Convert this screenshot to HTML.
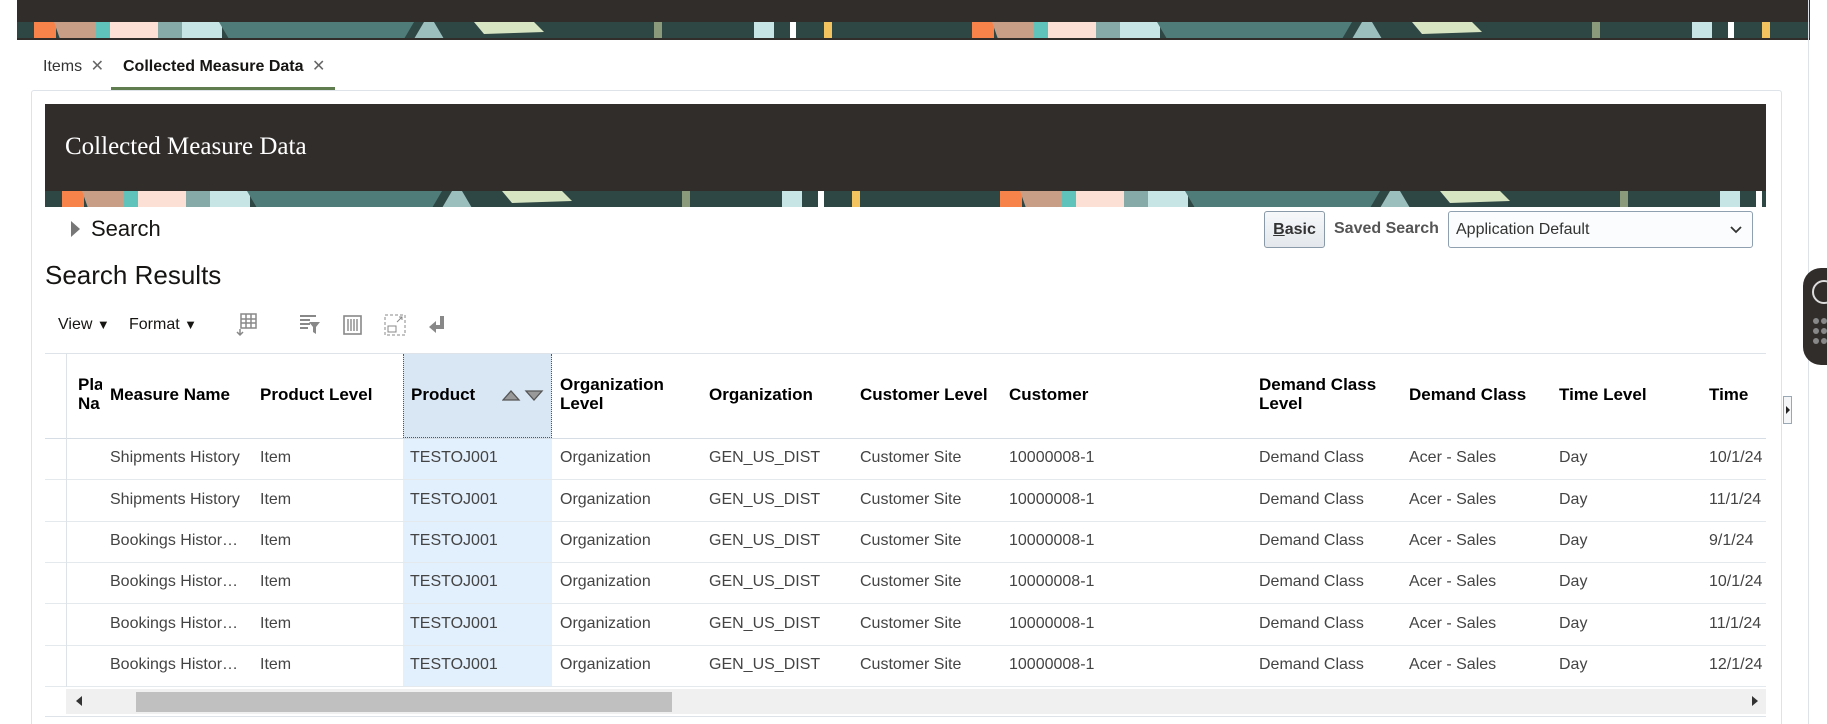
<!DOCTYPE html>
<html><head><meta charset="utf-8">
<style>
*{margin:0;padding:0;box-sizing:border-box}
html{width:1827px;height:724px;overflow:hidden}
body{width:1827px;height:724px;overflow:hidden;background:#fff;font-family:"Liberation Sans",Arial,sans-serif;color:#161513;position:relative}
.abs{position:absolute;white-space:nowrap}
.th{position:absolute;font-weight:bold;font-size:17px;color:#000;line-height:19px;white-space:nowrap}
.td{position:absolute;font-size:16px;color:#444;white-space:nowrap}
.hl{position:absolute;left:45px;width:1721px;height:1px;background:#e4e9ee}
</style></head><body>
<svg width="0" height="0" style="position:absolute">
<defs>
<pattern id="pt" x="17" y="0" width="938" height="17" patternUnits="userSpaceOnUse">
<rect width="938" height="17" fill="#2e4644"/>
<rect x="0" width="22" height="17" fill="#f7834a"/>
<polygon points="20,0 68,0 62,17 26,17" fill="#c99e86"/>
<rect x="62" width="14" height="17" fill="#5fc3bc"/>
<rect x="76" width="48" height="17" fill="#fde0d5"/>
<rect x="124" width="34" height="17" fill="#86aaa7"/>
<rect x="148" width="40" height="17" fill="#c8e5e5"/>
<polygon points="185,0 380,0 370,17 195,17" fill="#4f7c78"/>
<polygon points="390,0 400,0 410,17 380,17" fill="#9bbfbd"/>
<polygon points="440,0 500,0 510,10 450,12" fill="#d7e5c3"/>
<rect x="720" width="20" height="17" fill="#c8e5e5"/>
<rect x="756" width="6" height="17" fill="#fff"/>
<rect x="790" width="8" height="17" fill="#f2c35e"/>
<rect x="620" width="8" height="17" fill="#8a9a7a"/>
</pattern>
</defs></svg>

<div class="abs" style="left:17px;top:0;width:1793px;height:22px;background:#312d2a"></div>
<svg class="abs" style="left:17px;top:22px" width="1793" height="17"><rect x="-17" width="1810" height="17" fill="url(#pt)"/></svg>
<div class="abs" style="left:17px;top:38px;width:1793px;height:2px;background:#312d2a"></div>
<div class="abs" style="left:1808px;top:0;width:1px;height:724px;background:#dde3e8"></div>

<div class="abs" style="left:43px;top:56px;font-size:16px;color:#333">Items <span style="color:#666;margin-left:4px">✕</span></div>
<div class="abs" style="left:123px;top:56px;font-size:16px;font-weight:bold;color:#161513">Collected Measure Data <span style="color:#666;font-weight:normal;margin-left:4px">✕</span></div>
<div class="abs" style="left:111px;top:87px;width:224px;height:3px;background:#5f7d4f"></div>

<div class="abs" style="left:31px;top:90px;width:1751px;height:634px;border:1px solid #dde3e8;border-bottom:none;border-radius:3px 3px 0 0"></div>

<div class="abs" style="left:45px;top:104px;width:1721px;height:87px;background:#312d2a"></div>
<div class="abs" style="left:65px;top:133px;font-family:'Liberation Serif',Georgia,serif;font-size:25px;color:#fff">Collected Measure Data</div>
<svg class="abs" style="left:45px;top:191px" width="1721" height="16"><rect x="-28" width="1760" height="17" fill="url(#pt)"/></svg>

<div class="abs" style="left:71px;top:221px;width:0;height:0;border-top:8px solid transparent;border-bottom:8px solid transparent;border-left:9px solid #777"></div>
<div class="abs" style="left:91px;top:216px;font-size:22px;color:#161513">Search</div>
<div class="abs" style="left:1264px;top:211px;width:61px;height:37px;border:1px solid #8a9aa8;border-radius:3px;background:linear-gradient(#f6f8fa,#e4e8ec);font-size:16px;font-weight:bold;color:#333;text-align:center;line-height:35px"><u>B</u>asic</div>
<div class="abs" style="left:1334px;top:220px;font-size:16px;font-weight:bold;color:#555">Saved Search</div>
<div class="abs" style="left:1448px;top:211px;width:305px;height:37px;border:1px solid #8fa0b0;border-radius:3px;background:#fbfcfd;font-size:16px;color:#333;line-height:35px;padding-left:7px">Application Default
<svg class="abs" style="right:10px;top:14px" width="12" height="8"><path d="M1 1 L6 6 L11 1" stroke="#333" stroke-width="1.8" fill="none"/></svg></div>
<div class="abs" style="left:45px;top:260px;font-size:26px;color:#161513">Search Results</div>

<div class="abs" style="left:58px;top:316px;font-size:16px;color:#161513">View <span style="font-size:13px">▼</span></div>
<div class="abs" style="left:129px;top:316px;font-size:16px;color:#161513">Format <span style="font-size:13px">▼</span></div>
<svg class="abs" style="left:236px;top:313px" width="22" height="24"><g stroke="#888" fill="none" stroke-width="1.5"><rect x="5" y="1" width="15" height="14"/><path d="M5 6H20M5 10H20M10 1V15M15 1V15M4 16V22M1 19L4 22 7 19"/></g></svg>
<svg class="abs" style="left:299px;top:314px" width="22" height="22"><g fill="#888"><rect x="1" y="1" width="16" height="2"/><rect x="1" y="5" width="10" height="2"/><rect x="1" y="9" width="10" height="2"/><rect x="1" y="13" width="8" height="2"/><polygon points="10,8 21,8 17,13 17,20 14,18 14,13"/></g></svg>
<svg class="abs" style="left:343px;top:315px" width="20" height="20"><rect x="1" y="1" width="17" height="18" fill="none" stroke="#888" stroke-width="1.6"/><path d="M5 4V16M8 4V16M11 4V16M14 4V16" stroke="#888" stroke-width="1.4"/></svg>
<svg class="abs" style="left:384px;top:314px" width="22" height="22"><rect x="1" y="1" width="20" height="20" fill="none" stroke="#888" stroke-dasharray="3 2"/><path d="M13 8L18 3M15 3H18V6" stroke="#888" fill="none"/><rect x="4" y="12" width="8" height="6" fill="none" stroke="#888"/></svg>
<svg class="abs" style="left:428px;top:315px" width="20" height="20"><path d="M14 1V12H6" stroke="#888" stroke-width="4" fill="none"/><polygon points="8,6 1,12 8,18" fill="#888"/></svg>

<div class="hl" style="top:353px;background:#dde3e8"></div>
<div class="abs" style="left:403px;top:354px;width:149px;height:84px;background:#d9e7f5;border-left:1px dotted #555;border-right:1px dotted #555;border-bottom:1px dotted #555"></div>
<div class="abs" style="left:403px;top:439px;width:149px;height:248px;background:#e2effc"></div>
<div class="hl" style="top:438px;background:#d6dde4"></div>
<div class="hl" style="top:479px"></div><div class="hl" style="top:521px"></div><div class="hl" style="top:562px"></div><div class="hl" style="top:603px"></div><div class="hl" style="top:645px"></div><div class="hl" style="top:686px"></div>
<div class="abs" style="left:66px;top:354px;width:1px;height:333px;background:#dde3e8"></div>

<div class="th" style="left:78px;top:375px;width:24px;overflow:hidden">Pla<br>Na</div>
<div class="th" style="left:110px;top:385px">Measure Name</div>
<div class="th" style="left:260px;top:385px">Product Level</div>
<div class="th" style="left:411px;top:385px">Product</div>
<svg class="abs" style="left:502px;top:388px" width="44" height="14"><polygon points="1,12 9,3 17,12" fill="#999" stroke="#555" stroke-width="1.3"/><polygon points="24,3 40,3 32,12" fill="#999" stroke="#555" stroke-width="1.3"/></svg>
<div class="th" style="left:560px;top:375px">Organization<br>Level</div>
<div class="th" style="left:709px;top:385px">Organization</div>
<div class="th" style="left:860px;top:385px">Customer Level</div>
<div class="th" style="left:1009px;top:385px">Customer</div>
<div class="th" style="left:1259px;top:375px">Demand Class<br>Level</div>
<div class="th" style="left:1409px;top:385px">Demand Class</div>
<div class="th" style="left:1559px;top:385px">Time Level</div>
<div class="th" style="left:1709px;top:385px">Time</div>

<div class="abs" style="left:0;top:449px">
<div class="td" style="left:110px;top:0">Shipments History</div><div class="td" style="left:260px;top:0">Item</div><div class="td" style="left:410px;top:0">TESTOJ001</div><div class="td" style="left:560px;top:0">Organization</div><div class="td" style="left:709px;top:0">GEN_US_DIST</div><div class="td" style="left:860px;top:0">Customer Site</div><div class="td" style="left:1009px;top:0">10000008-1</div><div class="td" style="left:1259px;top:0">Demand Class</div><div class="td" style="left:1409px;top:0">Acer - Sales</div><div class="td" style="left:1559px;top:0">Day</div><div class="td" style="left:1709px;top:0">10/1/24</div>
</div>
<div class="abs" style="left:0;top:491px">
<div class="td" style="left:110px;top:0">Shipments History</div><div class="td" style="left:260px;top:0">Item</div><div class="td" style="left:410px;top:0">TESTOJ001</div><div class="td" style="left:560px;top:0">Organization</div><div class="td" style="left:709px;top:0">GEN_US_DIST</div><div class="td" style="left:860px;top:0">Customer Site</div><div class="td" style="left:1009px;top:0">10000008-1</div><div class="td" style="left:1259px;top:0">Demand Class</div><div class="td" style="left:1409px;top:0">Acer - Sales</div><div class="td" style="left:1559px;top:0">Day</div><div class="td" style="left:1709px;top:0">11/1/24</div>
</div>
<div class="abs" style="left:0;top:532px">
<div class="td" style="left:110px;top:0">Bookings Histor…</div><div class="td" style="left:260px;top:0">Item</div><div class="td" style="left:410px;top:0">TESTOJ001</div><div class="td" style="left:560px;top:0">Organization</div><div class="td" style="left:709px;top:0">GEN_US_DIST</div><div class="td" style="left:860px;top:0">Customer Site</div><div class="td" style="left:1009px;top:0">10000008-1</div><div class="td" style="left:1259px;top:0">Demand Class</div><div class="td" style="left:1409px;top:0">Acer - Sales</div><div class="td" style="left:1559px;top:0">Day</div><div class="td" style="left:1709px;top:0">9/1/24</div>
</div>
<div class="abs" style="left:0;top:573px">
<div class="td" style="left:110px;top:0">Bookings Histor…</div><div class="td" style="left:260px;top:0">Item</div><div class="td" style="left:410px;top:0">TESTOJ001</div><div class="td" style="left:560px;top:0">Organization</div><div class="td" style="left:709px;top:0">GEN_US_DIST</div><div class="td" style="left:860px;top:0">Customer Site</div><div class="td" style="left:1009px;top:0">10000008-1</div><div class="td" style="left:1259px;top:0">Demand Class</div><div class="td" style="left:1409px;top:0">Acer - Sales</div><div class="td" style="left:1559px;top:0">Day</div><div class="td" style="left:1709px;top:0">10/1/24</div>
</div>
<div class="abs" style="left:0;top:615px">
<div class="td" style="left:110px;top:0">Bookings Histor…</div><div class="td" style="left:260px;top:0">Item</div><div class="td" style="left:410px;top:0">TESTOJ001</div><div class="td" style="left:560px;top:0">Organization</div><div class="td" style="left:709px;top:0">GEN_US_DIST</div><div class="td" style="left:860px;top:0">Customer Site</div><div class="td" style="left:1009px;top:0">10000008-1</div><div class="td" style="left:1259px;top:0">Demand Class</div><div class="td" style="left:1409px;top:0">Acer - Sales</div><div class="td" style="left:1559px;top:0">Day</div><div class="td" style="left:1709px;top:0">11/1/24</div>
</div>
<div class="abs" style="left:0;top:656px">
<div class="td" style="left:110px;top:0">Bookings Histor…</div><div class="td" style="left:260px;top:0">Item</div><div class="td" style="left:410px;top:0">TESTOJ001</div><div class="td" style="left:560px;top:0">Organization</div><div class="td" style="left:709px;top:0">GEN_US_DIST</div><div class="td" style="left:860px;top:0">Customer Site</div><div class="td" style="left:1009px;top:0">10000008-1</div><div class="td" style="left:1259px;top:0">Demand Class</div><div class="td" style="left:1409px;top:0">Acer - Sales</div><div class="td" style="left:1559px;top:0">Day</div><div class="td" style="left:1709px;top:0">12/1/24</div>
</div>

<div class="abs" style="left:66px;top:689px;width:1700px;height:25px;background:#f0f0f0"></div>
<div class="abs" style="left:136px;top:692px;width:536px;height:20px;background:#c0c0c0"></div>
<div class="abs" style="left:76px;top:696px;width:0;height:0;border-top:5px solid transparent;border-bottom:5px solid transparent;border-right:6px solid #333"></div>
<div class="abs" style="left:1752px;top:696px;width:0;height:0;border-top:5px solid transparent;border-bottom:5px solid transparent;border-left:6px solid #333"></div>
<div class="hl" style="top:716px;background:#dde3e8"></div>

<div class="abs" style="left:1783px;top:396px;width:9px;height:28px;border:1px solid #9aa8b5;background:#f4f6f8"></div>
<div class="abs" style="left:1786px;top:406px;width:0;height:0;border-top:4px solid transparent;border-bottom:4px solid transparent;border-left:4px solid #222"></div>

<div class="abs" style="left:1803px;top:268px;width:40px;height:97px;background:#312d2a;border-radius:18px 0 0 18px"></div>
<div class="abs" style="left:1812px;top:280px;width:24px;height:24px;border:2px solid #ddd;border-radius:50%"></div>
<div class="abs" style="left:1813px;top:318px;width:6px;height:6px;border-radius:50%;background:#888;box-shadow:8px 0 #888,0 10px #888,8px 10px #888,0 20px #888,8px 20px #888"></div>
</body></html>
